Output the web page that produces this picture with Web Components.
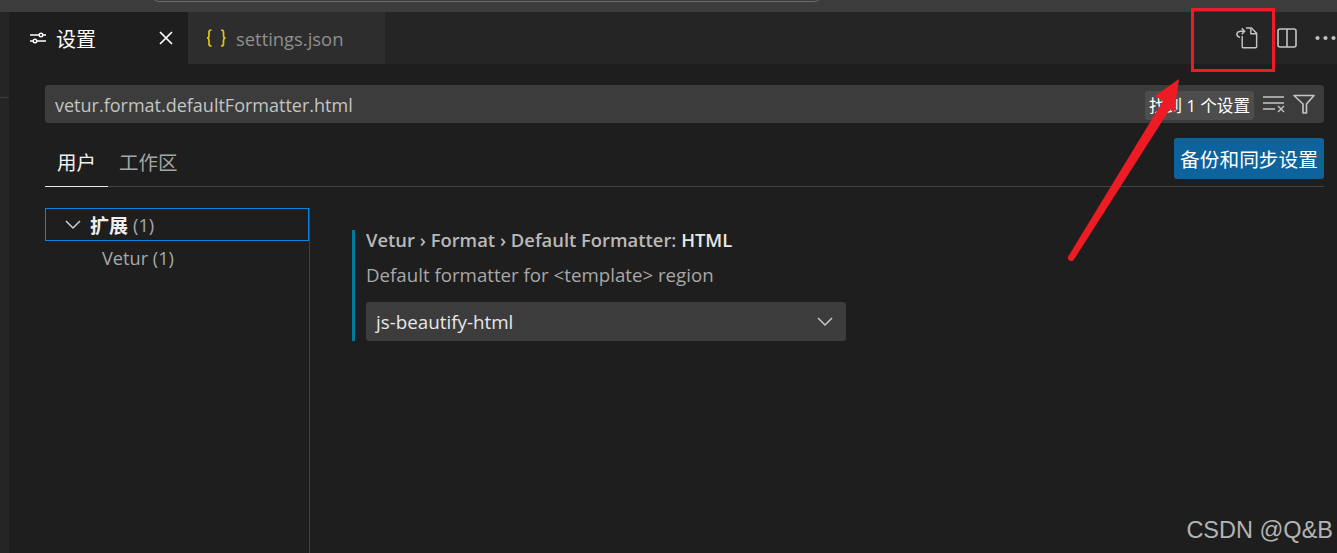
<!DOCTYPE html>
<html lang="zh">
<head>
<meta charset="utf-8">
<title>设置</title>
<style>
    html, body { margin: 0; height: 100%; background: #1e1e1e; overflow: hidden; }
    body {
        position: relative;
        width: 1337px;
        height: 553px;
        font-family: "Open Sans", "Noto Sans CJK SC", sans-serif;
        color: #ccc;
    }
</style>
</head>
<body>
<title-strip></title-strip>
<div style="display:flex;height:541px">
    <activity-edge></activity-edge>
    <div style="flex:1;min-width:0;display:flex;flex-direction:column">
        <editor-tabs></editor-tabs>
        <settings-search value="vetur.format.defaultFormatter.html" count="找到 1 个设置"></settings-search>
        <scope-tabs></scope-tabs>
        <div style="display:flex;flex:1;min-height:0">
            <settings-toc></settings-toc>
            <setting-item></setting-item>
        </div>
    </div>
</div>
<red-annotation></red-annotation>

<script>
class TitleStrip extends HTMLElement {
    constructor() {
        super()
        this.attachShadow({ mode: 'open' }).innerHTML = `
            <style>
                :host { display: block; height: 12px; background: #3c3c3c; position: relative; overflow: hidden; }
                .pill {
                    position: absolute; left: 151px; width: 671px; top: -16px; height: 18px;
                    box-sizing: border-box; border: 1px solid #6b6b6b; border-radius: 8px; background: #3a3a3a;
                }
            </style>
            <div class="pill"></div>`
    }
}

class ActivityEdge extends HTMLElement {
    constructor() {
        super()
        this.attachShadow({ mode: 'open' }).innerHTML = `
            <style>
                :host { display: block; width: 9px; background: #252526; flex: none; }
                .line { height: 1px; background: #3c3c3c; margin-top: 85px; }
            </style>
            <div class="line"></div>`
    }
}

class EditorTabs extends HTMLElement {
    constructor() {
        super()
        this.attachShadow({ mode: 'open' }).innerHTML = `
            <style>
                :host { display: flex; height: 52px; background: #252526; flex: none; align-items: stretch; }
                .tab { display: flex; align-items: center; box-sizing: border-box; }
                .active { width: 179px; background: #1e1e1e; color: #fff; padding-left: 20px; }
                .inactive { width: 197px; background: #2d2d2d; color: #8f8f8f; padding-left: 18px; }
                .label { font-size: 18.4px; }
                .active .label { margin-left: 9px; flex: 1; font-size: 20px; }
                .inactive .label { margin-left: 10px; }
                .close { margin-right: 14px; }
                .actions { margin-left: auto; display: flex; align-items: center; }
                svg { display: block; }
                .actions svg { fill: none; stroke: #c5c5c5; }
            </style>
            <div class="tab active">
                <svg width="18" height="18" viewBox="0 0 18 18" fill="none" stroke="#fff" stroke-width="1.4">
                    <path d="M1 6h9M14 6h3M1 12h3M8 12h9"/><circle cx="12" cy="6" r="1.8"/><circle cx="6" cy="12" r="1.8"/>
                </svg>
                <span class="label">设置</span>
                <svg class="close" width="16" height="16" viewBox="0 0 16 16" stroke="#fff" stroke-width="1.7"><path d="M2 2l12 12M14 2L2 14"/></svg>
            </div>
            <div class="tab inactive">
                <svg width="20" height="18" viewBox="0 0 20 18" fill="none" stroke="#e2c318" stroke-width="1.7">
                    <path d="M5.5 1Q3 1 3 3v3.500Q3 9 1 9 3 9 3 11.500V15q0 2 2.500 2"/>
                    <path d="M15 1q2.500 0 2.500 2v3.500q0 2.500 2 2.500-2 0-2 2.500V15q0 2-2.500 2"/>
                </svg>
                <span class="label">settings.json</span>
            </div>
            <div class="actions">
                <svg style="margin-right:17px" width="25" height="24" viewBox="0 0 26 24" stroke-width="1.5">
                    <path d="M7.5 10v11.2q0 1 1 1h13q1 0 1-1V7l-5.5-5.5h-5.5"/>
                    <path d="M16.5 2v5.5h6"/>
                    <path d="M5 11.5Q1.500 10 2 7.500 2.700 5 6 5h3.500M7 2l3 3-3 3"/>
                </svg>
                <svg style="margin-right:18px" width="20" height="20" viewBox="0 0 20 20" stroke-width="1.6">
                    <rect x="1" y="1" width="18" height="18" rx="2"/><path d="M10 1v18"/>
                </svg>
                <svg style="margin-right:1px" width="21" height="6" viewBox="0 0 21 6" stroke="none">
                    <circle cx="2.500" cy="3" r="1.600" fill="#c5c5c5"/><circle cx="10.500" cy="3" r="1.600" fill="#c5c5c5"/><circle cx="18.500" cy="3" r="1.600" fill="#c5c5c5"/>
                </svg>
            </div>`
    }
}

class SettingsSearch extends HTMLElement {
    constructor() {
        super()
        this.attachShadow({ mode: 'open' }).innerHTML = `
            <style>
                :host { display: block; padding: 21px 13px 0 36px; flex: none; }
                .box {
                    display: flex; align-items: center; height: 38px; background: #3c3c3c;
                    border-radius: 3px; padding: 0 9px 0 10px; font-size: 18px; color: #c4c4c4;
                }
                .value { flex: 1; padding-top: 1px; }
                .count {
                    background: #4d4d4d; color: #fff; border-radius: 3px; height: 29px; width: 109px;
                    display: flex; align-items: center; justify-content: center; font-size: 16.6px; white-space: nowrap; box-sizing: border-box; margin-top: 2px;
                }
                svg { display: block; fill: none; stroke: #c5c5c5; }
            </style>
            <div class="box">
                <span class="value"></span>
                <span class="count"></span>
                <svg style="margin-left:9px" width="22" height="18" viewBox="0 0 22 18" stroke-width="1.6">
                    <path d="M0 2h21M0 8h21M0 14h12"/><path d="M15 11l6 6M21 11l-6 6" stroke-width="1.4"/>
                </svg>
                <svg style="margin-left:8px" width="22" height="20" viewBox="0 0 22 20" stroke-width="1.6">
                    <path d="M1 1.500h20l-7.500 8.500v9h-3.500v-9z" stroke-linejoin="round"/>
                </svg>
            </div>`
        this.shadowRoot.querySelector('.value').textContent = this.getAttribute('value')
        this.shadowRoot.querySelector('.count').textContent = this.getAttribute('count')
    }
}

class ScopeTabs extends HTMLElement {
    constructor() {
        super()
        this.attachShadow({ mode: 'open' }).innerHTML = `
            <style>
                :host { display: block; margin: 14px 13px 0 36px; flex: none; position: relative; }
                .row { display: flex; align-items: flex-end; height: 49px; border-bottom: 1px solid #424242; }
                .scope { font-size: 19.500px; height: 48px; display: flex; align-items: center; box-sizing: border-box; padding-bottom: 2px; color: #a6a6a6; }
                .on { color: #f0f0f0; width: 63px; justify-content: center; border-bottom: 1px solid #e7e7e7; margin-bottom: -1px; height: 49px; }
                .off { margin-left: 11px; }
                .sync {
                    position: absolute; right: 0; top: 1px; width: 150px; height: 41px; border-radius: 3px;
                    background: #0e639c; color: #fff; font-size: 19.700px; display: flex; align-items: center; justify-content: center; white-space: nowrap;
                }
            </style>
            <div class="row">
                <span class="scope on">用户</span>
                <span class="scope off">工作区</span>
            </div>
            <div class="sync">备份和同步设置</div>`
    }
}

class SettingsToc extends HTMLElement {
    constructor() {
        super()
        this.attachShadow({ mode: 'open' }).innerHTML = `
            <style>
                :host { display: block; width: 264px; margin: 21px 0 0 36px; flex: none; border-right: 1px solid #404040; font-size: 18.200px; color: #a8a8a8; }
                .row { height: 33px; display: flex; align-items: center; box-sizing: border-box; }
                .sel { width: 264px; border: 1px solid #0a84e0; padding-left: 19px; }
                .sel svg { fill: none; stroke: #d0d0d0; stroke-width: 1.500; display: block; margin-right: 9px; }
                b { color: #eee; font-weight: 700; margin-right: 5px; font-size: 19px; }
                .child { padding-left: 57px; }
            </style>
            <div class="row sel">
                <svg width="16" height="10" viewBox="0 0 16 10"><path d="M1 1l7 7 7-7"/></svg>
                <b>扩展</b><span>(1)</span>
            </div>
            <div class="row child">Vetur (1)</div>`
    }
}

class SettingItem extends HTMLElement {
    constructor() {
        super()
        this.attachShadow({ mode: 'open' }).innerHTML = `
            <style>
                :host { display: block; margin: 43px 0 0 42px; width: 494px; height: 111px; flex: none; box-sizing: border-box; border-left: 3px solid #007a9c; padding-left: 11px; font-size: 18.700px; color: #a8a8a8; }
                .title { font-weight: 600; font-size: 18.400px; height: 21px; line-height: 20px; color: #b9b9b9; white-space: nowrap; }
                .title b { color: #e8e8e8; font-weight: 600; }
                .desc { margin-top: 13px; height: 21px; line-height: 21px; white-space: nowrap; }
                .select {
                    margin-top: 17px; height: 39px; background: #3c3c3c; border-radius: 3px; width: 480px;
                    display: flex; align-items: center; justify-content: space-between; box-sizing: border-box;
                    padding: 0 13px 0 10px; color: #e8e8e8; font-size: 18.800px;
                }
                svg { fill: none; stroke: #c8c8c8; stroke-width: 1.500; display: block; }
            </style>
            <div class="title">Vetur › Format › Default Formatter: <b>HTML</b></div>
            <div class="desc">Default formatter for &lt;template&gt; region</div>
            <div class="select">
                <span>js-beautify-html</span>
                <svg width="16" height="10" viewBox="0 0 16 10"><path d="M1 1l7 7 7-7"/></svg>
            </div>`
    }
}

// screenshot markup lying over the page: red box, arrow, watermark
class RedAnnotation extends HTMLElement {
    constructor() {
        super()
        this.attachShadow({ mode: 'open' }).innerHTML = `
            <style>
                :host { position: absolute; inset: 0; pointer-events: none; display: block; }
                .box { position: absolute; left: 1191px; top: 8px; width: 84px; height: 64px; box-sizing: border-box; border: 3px solid #ed1c24; }
                svg { position: absolute; left: 0; top: 0; }
                .mark { position: absolute; right: 4px; bottom: 9px; font: 23.500px "Liberation Sans", sans-serif; color: #b4b4b4; }
            </style>
            <div class="box"></div>
            <svg width="1337" height="553" viewBox="0 0 1337 553">
                <path d="M1179 79L1155 96 1163 101 1068.500 256a3.200 3.200 0 0 0 5.500 3.500L1170 109 1174 114z" fill="#ed1c24"/>
            </svg>
            <div class="mark">CSDN @Q&amp;B</div>`
    }
}

customElements.define('title-strip', TitleStrip)
customElements.define('activity-edge', ActivityEdge)
customElements.define('editor-tabs', EditorTabs)
customElements.define('settings-search', SettingsSearch)
customElements.define('scope-tabs', ScopeTabs)
customElements.define('settings-toc', SettingsToc)
customElements.define('setting-item', SettingItem)
customElements.define('red-annotation', RedAnnotation)
</script>
</body>
</html>
